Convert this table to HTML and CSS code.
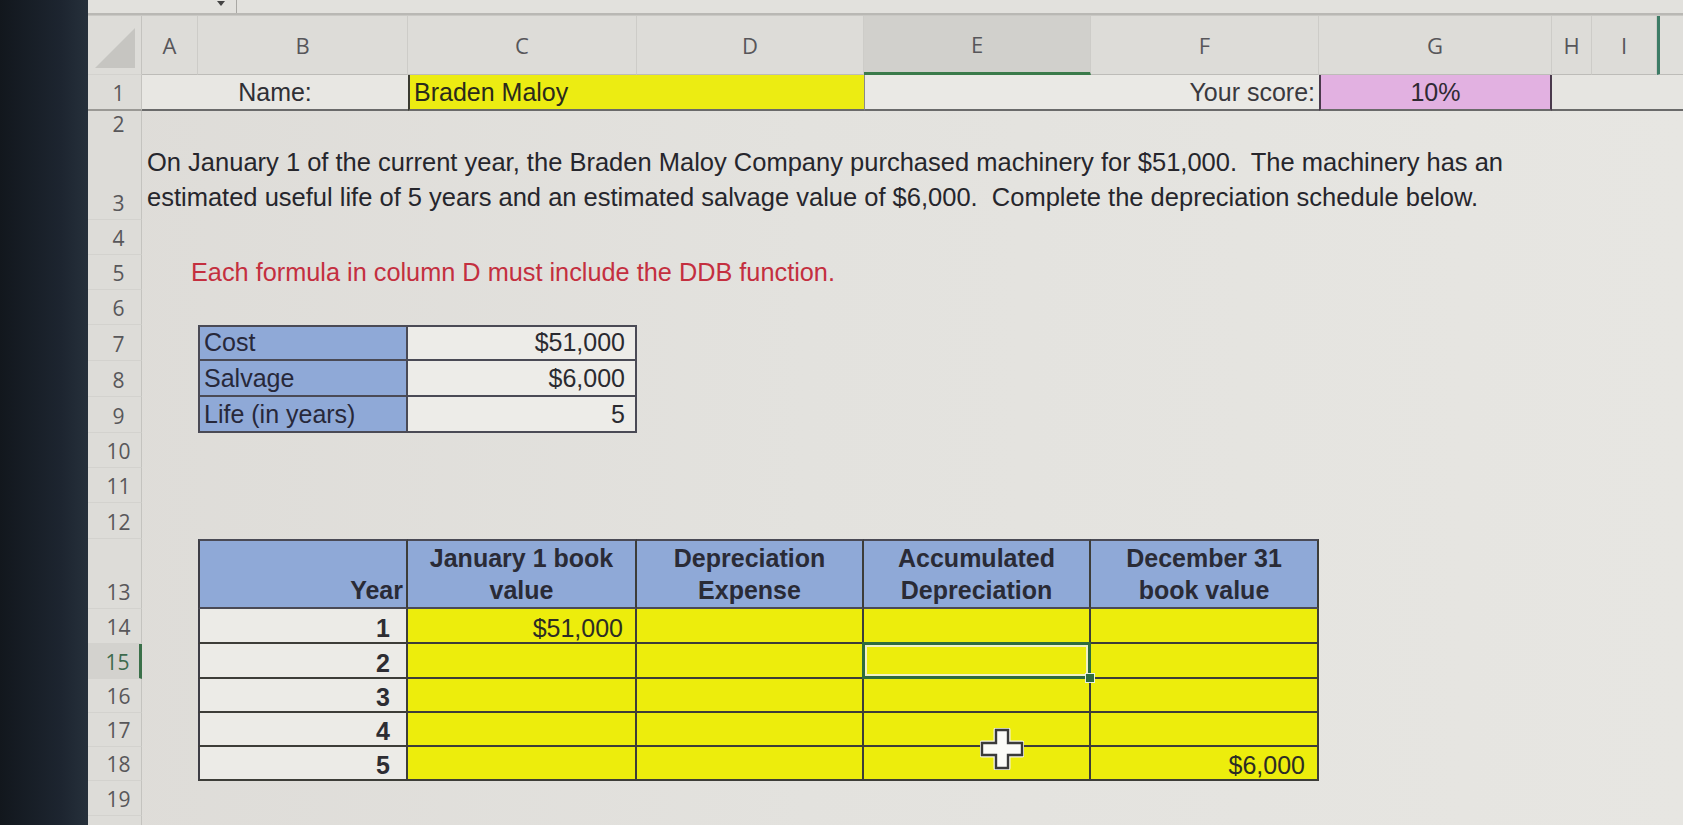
FILE: index.html
```html
<!DOCTYPE html>
<html>
<head>
<meta charset="utf-8">
<link rel="stylesheet" href="styles.css">
</head>
<body>
<div class="screen">
  <div class="bezel"></div>
  <div class="sheet">
    <div class="fbar"><span class="fb-arrow"></span><span class="fb-div"></span></div>

    <div class="row hdr">
      <div class="rh corner"><span class="tri"></span></div>
      <div class="ch">A</div>
      <div class="ch">B</div>
      <div class="ch">C</div>
      <div class="ch">D</div>
      <div class="ch sel">E</div>
      <div class="ch">F</div>
      <div class="ch">G</div>
      <div class="ch">H</div>
      <div class="ch">I</div>
      <div class="ch edge"></div>
    </div>

    <div class="row h36 r1">
      <div class="rh">1</div>
      <div class="cell cAB name">Name:</div>
      <div class="cell cCD yname">Braden Maloy</div>
      <div class="cell cEF score">Your score:</div>
      <div class="cell cG pct">10%</div>
      <div class="cell cHR band"></div>
    </div>

    <div class="row h25"><div class="rh">2</div></div>

    <div class="row h84">
      <div class="rh">3</div>
      <div class="cell cAG para">On January 1 of the current year, the Braden Maloy Company purchased machinery for $51,000.&nbsp; The machinery has an<br>estimated useful life of 5 years and an estimated salvage value of $6,000.&nbsp; Complete the depreciation schedule below.</div>
    </div>

    <div class="row h35"><div class="rh">4</div></div>

    <div class="row h35">
      <div class="rh">5</div>
      <div class="cell cAG warn">Each formula in column D must include the DDB function.</div>
    </div>

    <div class="row h35"><div class="rh">6</div></div>

    <div class="row h36">
      <div class="rh">7</div>
      <div class="cell cB st lbl first top">Cost</div>
      <div class="cell cC st val top">$51,000</div>
    </div>
    <div class="row h36">
      <div class="rh">8</div>
      <div class="cell cB st lbl first">Salvage</div>
      <div class="cell cC st val">$6,000</div>
    </div>
    <div class="row h36">
      <div class="rh">9</div>
      <div class="cell cB st lbl first">Life (in years)</div>
      <div class="cell cC st val">5</div>
    </div>

    <div class="row h35"><div class="rh">10</div></div>
    <div class="row h35"><div class="rh">11</div></div>
    <div class="row h36"><div class="rh">12</div></div>

    <div class="row h70">
      <div class="rh">13</div>
      <div class="cell cB bt th first top year">Year</div>
      <div class="cell cC bt th top">January 1 book<br>value</div>
      <div class="cell cD bt th top">Depreciation<br>Expense</div>
      <div class="cell cE bt th top">Accumulated<br>Depreciation</div>
      <div class="cell cF bt th top">December 31<br>book value</div>
    </div>

    <div class="row h35">
      <div class="rh">14</div>
      <div class="cell cB bt yr first">1</div>
      <div class="cell cC bt yel num">$51,000</div>
      <div class="cell cD bt yel"></div>
      <div class="cell cE bt yel"></div>
      <div class="cell cF bt yel"></div>
    </div>
    <div class="row h35">
      <div class="rh sel">15</div>
      <div class="cell cB bt yr first">2</div>
      <div class="cell cC bt yel"></div>
      <div class="cell cD bt yel"></div>
      <div class="cell cE bt yel active"></div>
      <div class="cell cF bt yel"></div>
    </div>
    <div class="row h34">
      <div class="rh">16</div>
      <div class="cell cB bt yr first">3</div>
      <div class="cell cC bt yel"></div>
      <div class="cell cD bt yel"></div>
      <div class="cell cE bt yel"></div>
      <div class="cell cF bt yel"></div>
    </div>
    <div class="row h34">
      <div class="rh">17</div>
      <div class="cell cB bt yr first">4</div>
      <div class="cell cC bt yel"></div>
      <div class="cell cD bt yel"></div>
      <div class="cell cE bt yel"></div>
      <div class="cell cF bt yel"></div>
    </div>
    <div class="row h34">
      <div class="rh">18</div>
      <div class="cell cB bt yr first">5</div>
      <div class="cell cC bt yel"></div>
      <div class="cell cD bt yel"></div>
      <div class="cell cE bt yel"></div>
      <div class="cell cF bt yel num">$6,000</div>
    </div>

    <div class="row h35"><div class="rh">19</div></div>
    <div class="row h35"><div class="rh">20</div></div>

    <svg class="cursor" width="44" height="42" viewBox="0 0 44 42" aria-hidden="true">
      <path d="M16 2 h12 v13 h14 v12 h-14 v13 h-12 v-13 h-14 v-12 h14 z" fill="none" stroke="#f4f4e8" stroke-width="5" stroke-linejoin="round"/>
      <path d="M16 2 h12 v13 h14 v12 h-14 v13 h-12 v-13 h-14 v-12 h14 z" fill="#fbfbf8" stroke="#3a3a3a" stroke-width="2.4"/>
    </svg>
  </div>
</div>
</body>
</html>
```

FILE: styles.css
```css
* { box-sizing: border-box; }
html, body { margin: 0; padding: 0; }
body {
  width: 1683px;
  height: 825px;
  overflow: hidden;
  background: #1b2129;
  font-family: "Liberation Sans", Arial, sans-serif;
  color: #2a2a30;
}
.screen { display: flex; height: 825px; }
.bezel {
  width: 88px;
  flex: none;
  background: linear-gradient(90deg, #12171d 0%, #1d2530 70%, #26303b 100%);
}
.sheet {
  flex: 1;
  position: relative;
  display: flex;
  flex-direction: column;
  background: linear-gradient(90deg, #dedcd8 0%, #e3e2de 45%, #e7e6e2 100%);
}

/* formula bar remnant */
.fbar {
  height: 15px;
  flex: none;
  display: flex;
  align-items: flex-start;
  padding-left: 129px;
  background: #e2e1dd;
  border-bottom: 2px solid #b9b8b4;
  overflow: hidden;
}
.fb-arrow {
  width: 0; height: 0;
  margin-top: 1px;
  border-left: 4px solid transparent;
  border-right: 4px solid transparent;
  border-top: 5px solid #444;
}
.fb-div { width: 1px; height: 15px; background: #a9a8a4; margin-left: 11px; }

/* grid rows */
.row {
  display: grid;
  grid-template-columns: 54px 56px 210px 229px 227px 227px 228px 233px 40px 65px 1fr;
  flex: none;
}
.h25 { height: 25px; }
.h34 { height: 34px; }
.h35 { height: 35px; }
.h36 { height: 36px; }
.h70 { height: 70px; }
.h84 { height: 84px; }

/* row header */
.rh {
  grid-column: 1;
  display: flex;
  align-items: flex-end;
  justify-content: center;
  padding: 0 0 3px 8px;
  font-family: "Open Sans", "Noto Sans", sans-serif;
  font-size: 21px;
  line-height: 26px;
  color: #58575a;
  background: #dddcd8;
  border-right: 1px solid #c4c3bf;
  border-bottom: 1px solid #d3d2ce;
}
.rh.sel {
  background: #d3d2ce;
  color: #3d6a4d;
  border-right: 3px solid #3a7049;
}

/* column header */
.hdr { height: 60px; border-top: 1px solid #c9c8c4; }
.hdr .rh { padding: 0; }
.corner { position: relative; align-items: flex-end; justify-content: flex-end; }
.tri {
  width: 0; height: 0;
  margin: 0 6px 6px 0;
  border-left: 40px solid transparent;
  border-bottom: 40px solid #c6c5c1;
}
.ch {
  display: flex;
  align-items: center;
  justify-content: center;
  font-family: "Open Sans", "Noto Sans", sans-serif;
  font-size: 22px;
  color: #57565a;
  background: #dddcd8;
  border-right: 1px solid #cdccc8;
  border-bottom: 1px solid #bdbcb8;
}
.ch.sel {
  background: #d1d0cc;
  border-bottom: 3px solid #3a7a4a;
}
.ch.edge {
  border-left: 3px solid #3d7c66;
  border-right: none;
  background: #e0dfdb;
}

/* cells */
.cell {
  display: flex;
  align-items: flex-end;
  font-size: 25px;
  line-height: 30px;
  padding: 0 4px 2px 4px;
  white-space: nowrap;
  min-width: 0;
}
.cA { grid-column: 2; }
.cB { grid-column: 3; }
.cC { grid-column: 4; }
.cD { grid-column: 5; }
.cE { grid-column: 6; }
.cF { grid-column: 7; }
.cG { grid-column: 8; }
.cAB { grid-column: 2 / 4; }
.cCD { grid-column: 4 / 6; }
.cEF { grid-column: 6 / 8; }
.cAG { grid-column: 2 / 9; }
.cHR { grid-column: 9 / 12; }

/* row 1 */
.r1 .cell { border-bottom: 2px solid #6a6a6a; }
.r1 .rh { border-bottom: 2px solid #9a9995; }
.name { justify-content: center; background: #e8e7e3; color: #2f2f35; }
.yname {
  background: #ecec12;
  border-left: 2px solid #3a3a30;
  color: #2a2a1c;
}
.score {
  justify-content: flex-end;
  background: #eae9e5;
  border-left: 1px solid #8a8a86;
  color: #3a393e;
}
.pct {
  justify-content: center;
  background: #e2b1e1;
  border-left: 2px solid #4a3a4c;
  border-right: 2px solid #4a3a4c;
  color: #2f2a33;
}
.band { background: #e6e5e1; }

/* instructions */
.para {
  align-items: center;
  white-space: normal;
  font-size: 25.5px;
  line-height: 35px;
  padding: 4px 0 0 5px;
  color: #26262c;
}
.warn {
  color: #c42f3f;
  font-size: 25.3px;
  padding-left: 49px;
  padding-bottom: 3px;
}

/* small table */
.st {
  border-right: 2px solid #4a4a55;
  border-bottom: 2px solid #4a4a55;
}
.st.first { border-left: 2px solid #4a4a55; }
.st.top, .bt.top { border-top: 2px solid #4a4a55; }
.lbl { background: #8fa9d7; color: #27283a; }
.val { justify-content: flex-end; background: #edece8; padding-right: 10px; color: #2a2a30; }

/* big table */
.bt {
  border-right: 2px solid #3d3d38;
  border-bottom: 2px solid #3d3d38;
  line-height: 28px;
  padding-bottom: 0;
}
.bt.first { border-left: 2px solid #3d3d45; }
.th {
  background: #8fa9d7;
  font-weight: bold;
  justify-content: center;
  text-align: center;
  line-height: 32px;
  padding-bottom: 1px;
  color: #2a2b36;
  border-bottom-color: #4a4a55;
}
.th.year { justify-content: flex-end; padding-right: 3px; }
.yr {
  justify-content: flex-end;
  background: #ecebe7;
  font-weight: bold;
  padding-right: 16px;
  color: #2d2d33;
}
.yel { background: #eded0c; }
.num { justify-content: flex-end; padding-right: 12px; color: #2c2c24; }

/* active cell */
.active { position: relative; }
.active::before {
  content: "";
  position: absolute;
  left: -2px; top: -2px; right: -2px; bottom: -2px;
  border: 3px solid #2f6b3e;
  box-shadow: inset 0 0 0 2px #f1f1c8;
}
.active::after {
  content: "";
  position: absolute;
  right: -6px; bottom: -6px;
  width: 8px; height: 8px;
  background: #2f6b3e;
  border: 1px solid #e8f0e0;
}

/* mouse cursor */
.cursor {
  position: absolute;
  left: 892px;
  top: 728px;
}
```
